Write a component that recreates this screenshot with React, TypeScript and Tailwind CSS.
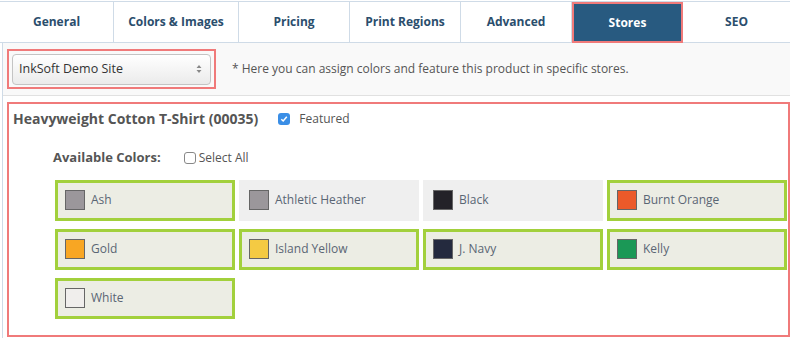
const tabs = [
  { label: "General", w: "w-[114px]" },
  { label: "Colors & Images", w: "w-[125px]" },
  { label: "Pricing", w: "w-[111px]" },
  { label: "Print Regions", w: "w-[111px]" },
  { label: "Advanced", w: "w-[111px]" },
  { label: "Stores", w: "w-[111px]", active: true },
  { label: "SEO", w: "flex-1" },
];

const colors = [
  { name: "Ash", hex: "#9b979b", on: true },
  { name: "Athletic Heather", hex: "#9b979b", on: false },
  { name: "Black", hex: "#232228", on: false },
  { name: "Burnt Orange", hex: "#ec5a2a", on: true },
  { name: "Gold", hex: "#f8a623", on: true },
  { name: "Island Yellow", hex: "#f4ca43", on: true },
  { name: "J. Navy", hex: "#242a3e", on: true },
  { name: "Kelly", hex: "#1b9856", on: true },
  { name: "White", hex: "#f0eeec", on: true },
];

const App = () => {
  return (
    <div className="w-[790px] h-[338px] overflow-hidden bg-white font-['Open_Sans',sans-serif] text-[12px]">
      {/* tabs */}
      <div className="mt-px flex h-[42px] border-t border-b border-[#cfdbe7]">
        {tabs.map((t) =>
          t.active ? (
            <div
              key={t.label}
              className={`${t.w} -mb-px flex items-center justify-center border-2 border-[#f07a7a] bg-[#285a80] font-bold text-white`}
            >
              {t.label}
            </div>
          ) : (
            <div
              key={t.label}
              className={`${t.w} flex items-center justify-center border-r border-[#cfdbe7] font-bold text-[#2b4e6d] last:border-r-0`}
            >
              {t.label}
            </div>
          )
        )}
      </div>

      <div className="ml-[2px] border-l border-[#cfdbe7] h-full">
        {/* store select row */}
        <div className="flex h-[53px] items-center border-b border-[#e1e1e1] bg-[#f9f9f9] pl-[4px]">
          <div className="flex h-[40px] w-[209px] items-center justify-center border-2 border-[#f07a7a]">
            <div className="flex h-[31px] w-[199px] items-center justify-between rounded-[4px] border border-[#c4c4c4] bg-gradient-to-b from-white to-[#ebebeb] pl-[6px] pr-[8px] text-[12.5px] text-[#333]">
              <span>InkSoft Demo Site</span>
              <svg width="6" height="10" viewBox="0 0 6 10">
                <path d="M3 1 L5.5 4 H0.5 Z M3 9 L5.5 6 H0.5 Z" fill="#888" />
              </svg>
            </div>
          </div>
          <span className="ml-[16px] text-[#555]">
            * Here you can assign colors and feature this product in specific stores.
          </span>
        </div>

        {/* product */}
        <div className="mt-[6px] ml-[4px] h-[235px] w-[783px] border-2 border-[#f07a7a] px-[4px] pt-[4px]">
          <div className="flex items-center">
            <span className="text-[14px] font-bold text-[#555]">Heavyweight Cotton T-Shirt (00035)</span>
            <span className="ml-[20px] flex h-[12px] w-[12px] items-center justify-center rounded-[3px] bg-[#3a8ee6]">
              <svg width="8" height="8" viewBox="0 0 8 8">
                <path d="M1.3 4.2 L3.2 6 L6.8 1.8" fill="none" stroke="white" strokeWidth="1.5" />
              </svg>
            </span>
            <span className="ml-[9px] text-[#555]">Featured</span>
          </div>

          <div className="mt-[19px] ml-[40px] flex items-center">
            <span className="text-[13px] font-bold text-[#555]">Available Colors:</span>
            <span className="ml-[23px] h-[12px] w-[12px] rounded-[3px] border border-[#888] bg-white" />
            <span className="ml-[3px] text-[#555]">Select All</span>
          </div>

          <div className="mt-[12px] ml-[42px] grid w-[732px] grid-cols-4 gap-x-[4px] gap-y-[8px]">
            {colors.map((c) => (
              <div
                key={c.name}
                className={
                  c.on
                    ? "flex h-[41px] items-center border-[3px] border-[#a2d03c] bg-[#ecede4] pl-[7px]"
                    : "flex h-[41px] items-center bg-[#efefef] pl-[10px]"
                }
              >
                <span
                  className="h-[20px] w-[20px] border border-[#666]"
                  style={{ backgroundColor: c.hex }}
                />
                <span className="ml-[6px] text-[#5a6674]">{c.name}</span>
              </div>
            ))}
          </div>
        </div>
      </div>
    </div>
  );
};

export default App;
